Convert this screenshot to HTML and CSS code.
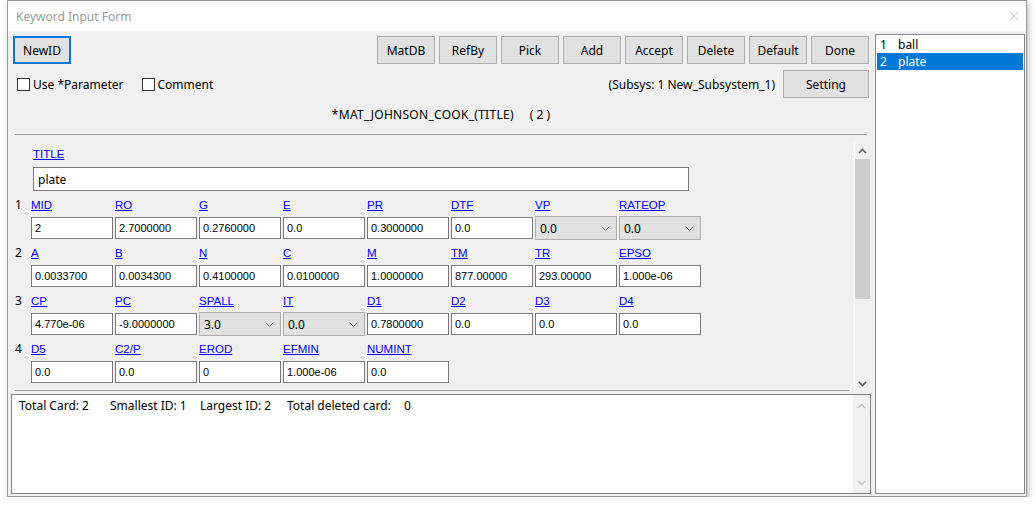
FILE: index.html
```html
<!DOCTYPE html>
<html lang="en">

<head>
    <meta charset="UTF-8">
    <title>Keyword Input Form</title>
    <link rel="stylesheet" href="styles.css">
</head>

<body>
    <div class="window">
        <div class="titlebar">
            <span class="title">Keyword Input Form</span>
            <svg class="close" width="10" height="10" viewBox="0 0 10 10"><path d="M0.5 0.5L9.5 9.5M9.5 0.5L0.5 9.5" stroke="#cfcfcf" stroke-width="1" fill="none"/></svg>
        </div>

        <div class="main">
            <div class="form">
                <!-- Toolbar -->
                <div class="toolbar">
                    <button class="btn primary">NewID</button>
                    <div class="toolbar-right">
                        <button class="btn">MatDB</button>
                        <button class="btn">RefBy</button>
                        <button class="btn">Pick</button>
                        <button class="btn">Add</button>
                        <button class="btn">Accept</button>
                        <button class="btn">Delete</button>
                        <button class="btn">Default</button>
                        <button class="btn">Done</button>
                    </div>
                </div>

                <div class="options">
                    <label class="check"><span class="box"></span>Use *Parameter</label>
                    <label class="check"><span class="box"></span>Comment</label>
                    <span class="subsys">(Subsys: 1 New_Subsystem_1)</span>
                    <button class="btn setting">Setting</button>
                </div>

                <div class="keyword"><span class="keyword-name">*MAT_JOHNSON_COOK_(TITLE)</span><span class="keyword-count">( 2 )</span></div>
                <div class="rule"></div>

                <!-- Cards -->
                <div class="scroll">
                    <div class="cards">
                        <div class="title-card">
                            <a class="field-label">TITLE</a>
                            <input class="input wide" type="text" value="plate">
                        </div>

                        <div class="card-row">
                            <span class="row-no">1</span>
                            <div class="field"><a class="field-label">MID</a><input class="input" type="text" value="2"></div>
                            <div class="field"><a class="field-label">RO</a><input class="input" type="text" value="2.7000000"></div>
                            <div class="field"><a class="field-label">G</a><input class="input" type="text" value="0.2760000"></div>
                            <div class="field"><a class="field-label">E</a><input class="input" type="text" value="0.0"></div>
                            <div class="field"><a class="field-label">PR</a><input class="input" type="text" value="0.3000000"></div>
                            <div class="field"><a class="field-label">DTF</a><input class="input" type="text" value="0.0"></div>
                            <div class="field"><a class="field-label">VP</a><div class="select"><span>0.0</span><svg width="9" height="5" viewBox="0 0 9 5"><path d="M0.5 0.5L4.5 4.5L8.5 0.5" stroke="#707070" fill="none"/></svg></div></div>
                            <div class="field"><a class="field-label">RATEOP</a><div class="select"><span>0.0</span><svg width="9" height="5" viewBox="0 0 9 5"><path d="M0.5 0.5L4.5 4.5L8.5 0.5" stroke="#707070" fill="none"/></svg></div></div>
                        </div>

                        <div class="card-row">
                            <span class="row-no">2</span>
                            <div class="field"><a class="field-label">A</a><input class="input" type="text" value="0.0033700"></div>
                            <div class="field"><a class="field-label">B</a><input class="input" type="text" value="0.0034300"></div>
                            <div class="field"><a class="field-label">N</a><input class="input" type="text" value="0.4100000"></div>
                            <div class="field"><a class="field-label">C</a><input class="input" type="text" value="0.0100000"></div>
                            <div class="field"><a class="field-label">M</a><input class="input" type="text" value="1.0000000"></div>
                            <div class="field"><a class="field-label">TM</a><input class="input" type="text" value="877.00000"></div>
                            <div class="field"><a class="field-label">TR</a><input class="input" type="text" value="293.00000"></div>
                            <div class="field"><a class="field-label">EPSO</a><input class="input" type="text" value="1.000e-06"></div>
                        </div>

                        <div class="card-row">
                            <span class="row-no">3</span>
                            <div class="field"><a class="field-label">CP</a><input class="input" type="text" value="4.770e-06"></div>
                            <div class="field"><a class="field-label">PC</a><input class="input" type="text" value="-9.0000000"></div>
                            <div class="field"><a class="field-label">SPALL</a><div class="select"><span>3.0</span><svg width="9" height="5" viewBox="0 0 9 5"><path d="M0.5 0.5L4.5 4.5L8.5 0.5" stroke="#707070" fill="none"/></svg></div></div>
                            <div class="field"><a class="field-label">IT</a><div class="select"><span>0.0</span><svg width="9" height="5" viewBox="0 0 9 5"><path d="M0.5 0.5L4.5 4.5L8.5 0.5" stroke="#707070" fill="none"/></svg></div></div>
                            <div class="field"><a class="field-label">D1</a><input class="input" type="text" value="0.7800000"></div>
                            <div class="field"><a class="field-label">D2</a><input class="input" type="text" value="0.0"></div>
                            <div class="field"><a class="field-label">D3</a><input class="input" type="text" value="0.0"></div>
                            <div class="field"><a class="field-label">D4</a><input class="input" type="text" value="0.0"></div>
                        </div>

                        <div class="card-row">
                            <span class="row-no">4</span>
                            <div class="field"><a class="field-label">D5</a><input class="input" type="text" value="0.0"></div>
                            <div class="field"><a class="field-label">C2/P</a><input class="input" type="text" value="0.0"></div>
                            <div class="field"><a class="field-label">EROD</a><input class="input" type="text" value="0"></div>
                            <div class="field"><a class="field-label">EFMIN</a><input class="input" type="text" value="1.000e-06"></div>
                            <div class="field"><a class="field-label">NUMINT</a><input class="input" type="text" value="0.0"></div>
                        </div>

                        <div class="cards-rule"></div>
                    </div>

                    <div class="vscroll">
                        <div class="arrow"><svg width="9" height="6" viewBox="0 0 9 6"><path d="M1 5L4.5 1.5L8 5" stroke="#606060" stroke-width="1.6" fill="none"/></svg></div>
                        <div class="thumb"></div>
                        <div class="arrow down"><svg width="9" height="6" viewBox="0 0 9 6"><path d="M1 1L4.5 4.5L8 1" stroke="#606060" stroke-width="1.6" fill="none"/></svg></div>
                    </div>
                </div>

                <!-- Status log -->
                <div class="log">
                    <div class="log-text">
                        <span class="stat s1">Total Card: 2</span><span class="stat s2">Smallest ID: 1</span><span class="stat s3">Largest ID: 2</span><span class="stat s4">Total deleted card:</span><span>0</span>
                    </div>
                    <div class="vscroll light">
                        <div class="arrow"><svg width="9" height="6" viewBox="0 0 9 6"><path d="M1 5L4.5 1.5L8 5" stroke="#c2c2c2" stroke-width="1.4" fill="none"/></svg></div>
                        <div class="arrow down"><svg width="9" height="6" viewBox="0 0 9 6"><path d="M1 1L4.5 4.5L8 1" stroke="#c2c2c2" stroke-width="1.4" fill="none"/></svg></div>
                    </div>
                </div>
            </div>

            <ul class="list">
                <li><span>1</span>ball</li>
                <li class="selected"><span>2</span>plate</li>
            </ul>
        </div>
    </div>
</body>

</html>
```

FILE: styles.css
```css
/* General */
* {
    box-sizing: border-box;
}

body {
    margin: 0;
    background: #fff;
    font-family: "Noto Sans", sans-serif;
    font-size: 12px;
    color: #000;
}

.window {
    margin-left: 7px;
    width: 1020px;
    height: 497px;
    border: 1px solid #999;
    box-shadow: 2px 3px 6px rgba(0, 0, 0, 0.25);
    display: flex;
    flex-direction: column;
}

.titlebar {
    height: 30px;
    flex: none;
    background: #fff;
    display: flex;
    align-items: center;
    justify-content: space-between;
    padding: 0 7px 0 8px;
}

.title {
    color: #999;
}

.main {
    flex: 1;
    background: #f0f0f0;
    display: flex;
    gap: 4px;
    padding: 3px 1px 2px 3px;
}

.form {
    width: 860px;
    display: flex;
    flex-direction: column;
}

/* Buttons */
.btn {
    height: 28px;
    width: 58px;
    padding: 0;
    background: #e1e1e1;
    border: 1px solid #adadad;
    font-family: "Noto Sans", sans-serif;
    font-size: 12px;
    color: #000;
}

.btn.primary {
    border: 2px solid #0078d7;
}

.toolbar {
    margin-top: 2px;
    height: 28px;
    display: flex;
    justify-content: space-between;
    padding: 0 2px;
}

.toolbar-right {
    display: flex;
    gap: 4px;
}

.options {
    margin-top: 6px;
    height: 28px;
    display: flex;
    align-items: center;
    padding: 0 2px 0 6px;
}

.check {
    display: flex;
    align-items: center;
    gap: 3px;
    margin-right: 18px;
}

.box {
    width: 13px;
    height: 13px;
    border: 1px solid #333;
    background: #fff;
}

.subsys {
    margin-left: auto;
}

.btn.setting {
    width: 86px;
    margin-left: 8px;
}

.keyword {
    margin-top: 7px;
    height: 20px;
    line-height: 20px;
    text-align: center;
}

.keyword-name {
    letter-spacing: 0.28px;
}

.keyword-count {
    margin-left: 16px;
    white-space: pre;
}

.rule {
    margin: 9px 4px 0;
    height: 1px;
    background: #a0a0a0;
}

/* Card area */
.scroll {
    margin-top: 7px;
    height: 250px;
    display: flex;
    overflow: hidden;
}

.cards {
    flex: 1;
}

.field-label {
    display: block;
    height: 14px;
    line-height: 14px;
    font-family: "Liberation Sans", Arial, sans-serif;
    font-size: 11.5px;
    color: #0000ff;
    text-decoration: underline;
}

.input {
    display: block;
    width: 82px;
    height: 22px;
    margin: 0;
    padding: 0 3px;
    border: 1px solid #7a7a7a;
    background: #fff;
    font-family: "Liberation Sans", Arial, sans-serif;
    font-size: 11px;
    color: #000;
    outline: none;
}

.title-card {
    padding: 5px 0 0 22px;
}

.input.wide {
    width: 656px;
    height: 24px;
    margin-top: 6px;
    font-family: "Noto Sans", sans-serif;
    font-size: 12px;
    padding: 0 4px;
}

.card-row {
    margin-top: 7px;
    display: grid;
    grid-template-columns: 18px repeat(8, 82px);
    column-gap: 2px;
}

.row-no {
    padding-left: 4px;
    line-height: 14px;
    color: #000;
}

.field {
    display: flex;
    flex-direction: column;
    gap: 5px;
}

.select {
    height: 24px;
    margin: -1px 0;
    display: flex;
    align-items: center;
    justify-content: space-between;
    padding: 1px 6px 0 4px;
    background: #e1e1e1;
    border: 1px solid #adadad;
}

.cards-rule {
    margin: 7px 5px 0 4px;
    height: 1px;
    background: #a0a0a0;
}

/* Scrollbars */
.vscroll {
    width: 17px;
    border-left: 1px solid #fff;
    padding-right: 1px;
    display: flex;
    flex-direction: column;
    background: #f0f0f0;
}

.arrow {
    height: 17px;
    display: flex;
    align-items: center;
    justify-content: center;
}

.arrow.down {
    margin-top: auto;
}

.thumb {
    height: 140px;
    background: #cdcdcd;
}

.vscroll.light {
    border-left: none;
    padding: 2px 0;
}

/* Status log */
.log {
    margin-top: 2px;
    height: 100px;
    display: flex;
    border: 1px solid #828282;
    background: #fff;
}

.log-text {
    flex: 1;
    padding: 3px 0 0 7px;
    line-height: 16px;
    white-space: nowrap;
}

.stat {
    display: inline-block;
}

.s1 { width: 91px; }
.s2 { width: 90px; }
.s3 { width: 87px; }
.s4 { width: 117px; }

/* Keyword list */
.list {
    width: 150px;
    margin: 0;
    padding: 1px;
    list-style: none;
    background: #fff;
    border: 1px solid #828790;
}

.list li {
    height: 17px;
    line-height: 17px;
    padding-left: 3px;
}

.list li span {
    display: inline-block;
    width: 18px;
}

.list li.selected {
    background: #0078d7;
    color: #fff;
}
```
